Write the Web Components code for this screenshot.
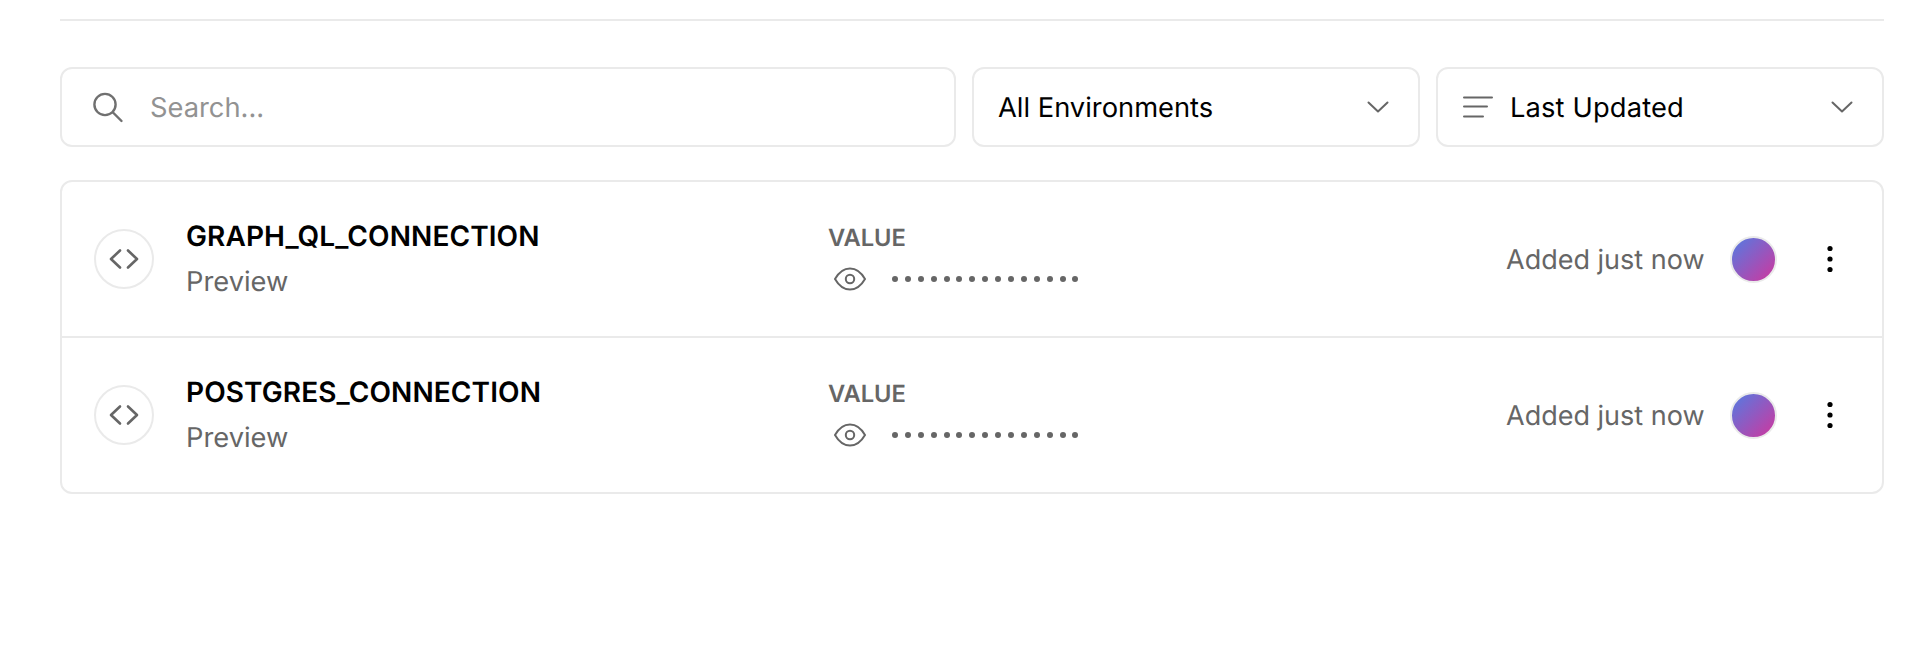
<!DOCTYPE html>
<html><head><meta charset="utf-8"><style>
html,body{margin:0;background:#fff}
body{font-family:Inter,"Liberation Sans",sans-serif;color:#000;text-rendering:geometricPrecision}
</style></head><body>
<env-page></env-page>
<script>
const I={
search:'<svg width="32" height="32" viewBox="0 0 32 32" fill="none" stroke="#707070" stroke-width="2.4" stroke-linecap="round"><circle cx="13" cy="13.500" r="10.600"/><path d="M21 21.500l8.500 8.500"/></svg>',
chev:'<svg width="24" height="24" viewBox="0 0 24 24" fill="none" stroke="#666" stroke-width="2" stroke-linecap="round" stroke-linejoin="round"><path d="M2.500 7.500L12 16.500l9.500-9"/></svg>',
sort:'<svg width="30" height="24" viewBox="0 0 30 24" fill="none" stroke="#666" stroke-width="2" stroke-linecap="round"><path d="M1 2.500h28M1 11.500h23M1 21.500h19"/></svg>',
code:'<svg width="30" height="22" viewBox="0 0 30 22" fill="none" stroke="#666" stroke-width="2.600" stroke-linecap="round" stroke-linejoin="round"><path d="M11 2.500L2 11l9 8.500M19 2.500l9 8.500-9 8.500"/></svg>',
eye:'<svg width="32" height="24" viewBox="0 0 32 24" fill="none" stroke="#666" stroke-width="2" stroke-linejoin="round"><path d="M1 12C5 5 10 1.500 16 1.500S27 5 31 12c-4 7-9 10.500-15 10.500S5 19 1 12z"/><circle cx="16" cy="12" r="4.200"/></svg>',
more:'<svg width="8" height="28" viewBox="0 0 8 28"><circle cx="4" cy="3.500" r="2.600"/><circle cx="4" cy="14" r="2.600"/><circle cx="4" cy="24.500" r="2.600"/></svg>'
};
function def(name,css,html){customElements.define(name,class extends HTMLElement{constructor(){super();this.attachShadow({mode:'open'}).innerHTML='<style>'+css+'</style>'+(typeof html==='function'?html(this):html)}})}
const box=':host{display:flex;align-items:center;box-sizing:border-box;height:80px;border:2px solid #eaeaea;border-radius:12px;background:#fff;font-size:27.3px;min-width:0}';
def('env-search',box+':host{padding:0 0 0 30px;gap:26px;color:#929292}svg{flex:none}span{line-height:1;padding-top:2px}',()=>I.search+'<span>Search...</span>');
def('env-select',box+':host{padding:0 28px 0 24px}:host([sort]){padding-left:25px;letter-spacing:.15px}span{flex:1;line-height:1;display:flex;align-items:center;gap:17px;padding-top:2px}svg{flex:none}',()=>'<span><slot></slot></span>'+I.chev);
customElements.define('sort-icon',class extends HTMLElement{constructor(){super();this.attachShadow({mode:'open'}).innerHTML='<style>:host{display:flex;margin-top:-2px}</style>'+I.sort}});
def('env-row',`:host{display:grid;grid-template-columns:734px 1fr auto;align-items:center;box-sizing:border-box;height:154px;padding:0 48px 0 32px}
:host(:not(:last-child)){border-bottom:2px solid #eaeaea;height:156px}
.l{display:flex;align-items:center;gap:32px}
.c{width:60px;height:60px;box-sizing:border-box;border:2px solid #eaeaea;border-radius:50%;display:flex;align-items:center;justify-content:center;flex:none}
.n{font-size:28px;font-weight:560;letter-spacing:.1px;line-height:32px;color:#000;white-space:nowrap}
.p{font-size:27.3px;line-height:32px;color:#666;margin-top:14px}
.vl{font-size:23.700px;font-weight:600;color:#666;line-height:28px;margin-top:-1px}
.vr{display:flex;align-items:center;gap:26px;margin:13px 0 0 6px;height:28px}
.dots{display:flex;gap:6.900px}
.dots i{width:6px;height:6px;border-radius:50%;background:#666}
.r{display:flex;align-items:center}
.t{font-size:27px;color:#666;line-height:32px;padding-top:1px}
.a{width:47px;height:47px;box-sizing:border-box;border:2px solid #eaeaea;border-radius:50%;margin-left:25px;background:linear-gradient(135deg,#4d7fe6,#d6339a) border-box}
.m{margin-left:49.500px;display:flex}
`,el=>`<div class="l"><div class="c">${I.code}</div><div><div class="n">${el.getAttribute('name')}</div><div class="p">Preview</div></div></div>
<div><div class="vl">VALUE</div><div class="vr">${I.eye}<div class="dots">${'<i></i>'.repeat(15)}</div></div></div>
<div class="r"><span class="t">Added just now</span><div class="a"></div><div class="m">${I.more}</div></div>`);
def('env-list',':host{display:block;border:2px solid #eaeaea;border-radius:12px;background:#fff;margin-top:33px}','<slot></slot>');
def('env-page',`:host{display:block;padding:19px 44px 0 60px;height:662px;box-sizing:border-box;overflow:hidden}
hr{border:0;height:2px;background:#eaeaea;margin:0 0 46px}
.bar{display:grid;grid-template-columns:2fr 1fr 1fr;gap:16px}`,
`<hr><div class="bar"><env-search></env-search><env-select>All Environments</env-select><env-select sort><sort-icon></sort-icon>Last Updated</env-select></div>
<env-list><env-row name="GRAPH_QL_CONNECTION"></env-row><env-row name="POSTGRES_CONNECTION"></env-row></env-list>`);
</script>
</body></html>
